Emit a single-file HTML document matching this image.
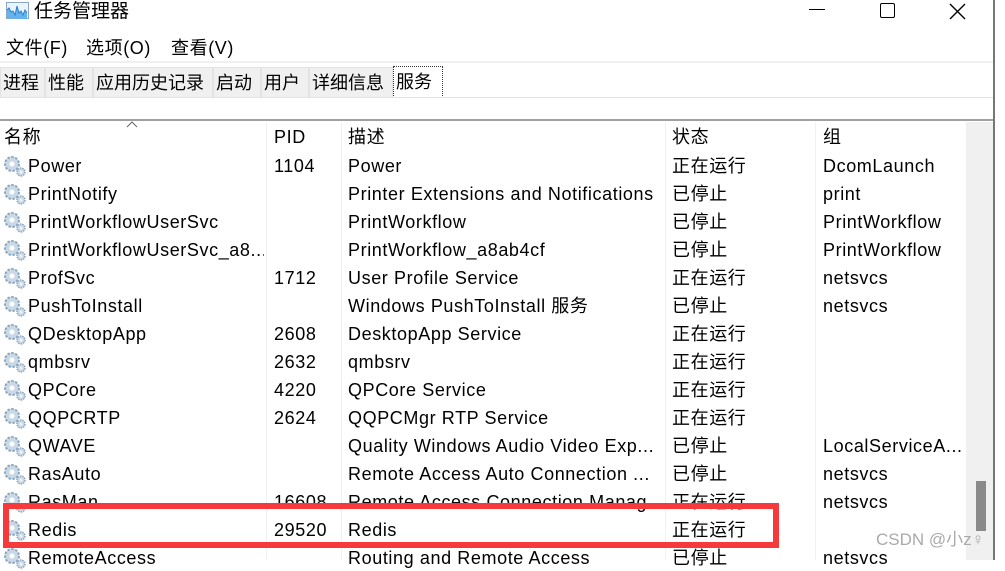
<!DOCTYPE html>
<html><head><meta charset="utf-8"><style>
*{margin:0;padding:0;box-sizing:border-box}
body{width:1005px;height:560px;overflow:hidden;background:#fff;position:relative;font-family:"Liberation Sans","Noto Sans CJK SC",sans-serif;color:#000;font-size:18px;letter-spacing:0.6px}
.a{position:absolute;white-space:nowrap;line-height:20px}
.tab{position:absolute;top:67px;height:31px;background:#f0f0f0;border:1px solid #e3e3e3;padding:4px 2px;line-height:22px;font-size:18px;white-space:nowrap;overflow:hidden;letter-spacing:0}
.vl{position:absolute;top:122px;bottom:0;width:1px;background:#eef2f7}
</style></head><body>
<svg class="a" style="left:6px;top:2px" width="23" height="17" viewBox="0 0 23 17"><rect x=".5" y=".5" width="22" height="16" fill="#eaf4fc" stroke="#8aa8c4"/><path d="M1 16V8l2-2 2 4 2-1 2 4 2-9 2 7 2-2 2 4 2-5 2 3v7z" fill="#64b3ef"/><path d="M1 8l2-2 2 4 2-1 2 4 2-9 2 7 2-2 2 4 2-5 2 3" fill="none" stroke="#2e7fcf"/></svg>
<div class="a" style="left:34px;top:2px;font-size:19px;letter-spacing:0">任务管理器</div>
<div class="a" style="left:809px;top:9px;width:16px;height:1px;background:#000"></div>
<div class="a" style="left:880px;top:3px;width:15px;height:15px;border:1.5px solid #000;border-radius:2px"></div>
<svg class="a" style="left:949px;top:3px" width="17" height="17"><path d="M1 1L16 16M16 1L1 16" stroke="#000" stroke-width="1.4"/></svg>
<div class="a" style="left:6px;top:38px">文件(F)</div>
<div class="a" style="left:86px;top:38px">选项(O)</div>
<div class="a" style="left:171px;top:38px">查看(V)</div>
<div class="a" style="left:0;top:61px;width:993px;height:2px;background:#f0f0f0"></div>
<div class="tab" style="left:0;width:45px">进程</div>
<div class="tab" style="left:45px;width:48px">性能</div>
<div class="tab" style="left:93px;width:120px">应用历史记录</div>
<div class="tab" style="left:213px;width:48px">启动</div>
<div class="tab" style="left:261px;width:48px">用户</div>
<div class="tab" style="left:309px;width:84px">详细信息</div>
<div class="tab" style="left:393px;width:50px;background:#fff;border:1px dotted #333;top:66px;height:32px">服务</div>
<div class="a" style="left:0;top:97px;width:993px;height:1px;background:#e3e3e3"></div>
<div class="a" style="left:0;top:119px;width:993px;height:2px;background:#a0a0a0"></div>
<svg class="a" style="left:126px;top:121px" width="12" height="7"><path d="M1 6L6 1 11 6" fill="none" stroke="#666"/></svg>
<div class="vl" style="left:266px"></div><div class="vl" style="left:341px"></div><div class="vl" style="left:665px"></div><div class="vl" style="left:815px"></div>
<div class="a" style="left:966px;top:122px;width:27px;height:438px;background:#f0f0f0"></div>
<div class="a" style="left:976px;top:481px;width:10px;height:50px;background:#8a8a8a"></div>
<div class="a" style="left:993px;top:0;width:2px;height:560px;background:#777"></div>
<div class="a" style="left:4px;top:127px">名称</div><div class="a" style="left:274px;top:127px">PID</div><div class="a" style="left:348px;top:127px">描述</div><div class="a" style="left:672px;top:127px">状态</div><div class="a" style="left:823px;top:127px">组</div>
<div id="rows"></div>
<div class="a" style="left:3px;top:503px;width:776px;height:45px;border:6px solid #f63a3c"></div>
<div class="a" style="left:876px;top:530px;color:#aaa;font-size:17px;letter-spacing:0">CSDN @小z♀</div>
<script>
var d=[["Power","1104","Power","正在运行","DcomLaunch"],["PrintNotify","","Printer Extensions and Notifications","已停止","print"],["PrintWorkflowUserSvc","","PrintWorkflow","已停止","PrintWorkflow"],["PrintWorkflowUserSvc_a8...","","PrintWorkflow_a8ab4cf","已停止","PrintWorkflow"],["ProfSvc","1712","User Profile Service","正在运行","netsvcs"],["PushToInstall","","Windows PushToInstall 服务","已停止","netsvcs"],["QDesktopApp","2608","DesktopApp Service","正在运行",""],["qmbsrv","2632","qmbsrv","正在运行",""],["QPCore","4220","QPCore Service","正在运行",""],["QQPCRTP","2624","QQPCMgr RTP Service","正在运行",""],["QWAVE","","Quality Windows Audio Video Exp...","已停止","LocalServiceA..."],["RasAuto","","Remote Access Auto Connection ...","已停止","netsvcs"],["RasMan","16608","Remote Access Connection Manag","正在运行","netsvcs"],["Redis","29520","Redis","正在运行",""],["RemoteAccess","","Routing and Remote Access","已停止","netsvcs"]];
var h="",xs=[28,274,348,672,823];
d.forEach(function(r,i){var t=156+28*i;
h+='<svg class="a" style="left:1px;top:'+(t-1)+'px" width="26" height="24"><circle cx="11" cy="9" r="7" fill="#c9d9e8" stroke="#8ea7bf" stroke-width="2" stroke-dasharray="2.5 1.5"/><circle cx="11" cy="9" r="2.5" fill="#fff"/><circle cx="20" cy="17" r="4" fill="#c9d9e8" stroke="#8ea7bf" stroke-width="1.5" stroke-dasharray="1.5 1"/><circle cx="20" cy="17" r="1.3" fill="#fff"/></svg>';
r.forEach(function(c,j){var mw=j==0?236:(j==2?312:(j==4?140:999));h+='<div class="a" style="left:'+xs[j]+'px;top:'+t+'px;max-width:'+mw+'px;overflow:hidden">'+c+'</div>'});});
document.getElementById("rows").innerHTML=h;
</script>
</body></html>
